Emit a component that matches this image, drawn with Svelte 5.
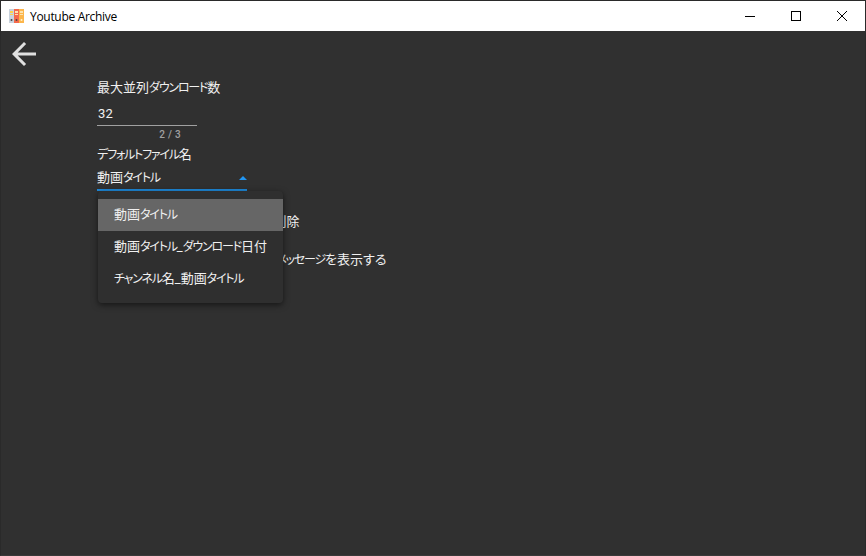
<script lang="ts">
  const options = ['動画タイトル', '動画タイトル_ダウンロード日付', 'チャンネル名_動画タイトル'];
  let selected = $state(0);

  // the original font has much narrower kana than Noto, so kana runs get their own class
  const runs = (text: string) => text.split(/([ァ-ヶー]+)/).filter(Boolean);
  const isKana = (run: string) => /^[ァ-ヶー]/.test(run);
</script>

{#snippet jp(text: string)}
  {#each runs(text) as run}<span class:kana={isKana(run)}>{run}</span>{/each}
{/snippet}

<div class="window">
  <header class="titlebar">
    <svg class="app-icon" viewBox="0 0 16 16" width="16" height="16" aria-hidden="true">
      <rect x="0" y="1" width="5" height="14" fill="#c9d3de" />
      <rect x="5" y="1" width="5" height="14" fill="#f4694c" />
      <rect x="10" y="1" width="5" height="14" fill="#fcb64b" />
      <rect x="1" y="3" width="3" height="2" fill="#fcd24b" />
      <rect x="6" y="3" width="3" height="2" fill="#fde3b0" />
      <rect x="11" y="3" width="3" height="2" fill="#fde3b0" />
      <rect x="1" y="6" width="3" height="1" fill="#fcd24b" />
      <rect x="6" y="6" width="3" height="1" fill="#fde3b0" />
      <rect x="11" y="6" width="3" height="1" fill="#fde3b0" />
      <circle cx="2.5" cy="12" r="1" fill="#444" />
      <circle cx="7.5" cy="12" r="1" fill="#444" />
      <circle cx="12.5" cy="12" r="1" fill="#fff2cf" />
    </svg>
    <span class="title">Youtube Archive</span>
    <div class="controls">
      <button class="ctl" aria-label="Minimize">
        <svg width="10" height="10" viewBox="0 0 10 10"><path d="M0 5.5H10" stroke="#000" /></svg>
      </button>
      <button class="ctl" aria-label="Maximize">
        <svg width="10" height="10" viewBox="0 0 10 10"><rect x=".5" y=".5" width="9" height="9" fill="none" stroke="#000" /></svg>
      </button>
      <button class="ctl" aria-label="Close">
        <svg width="10" height="10" viewBox="0 0 10 10"><path d="M0 0L10 10M10 0L0 10" stroke="#000" /></svg>
      </button>
    </div>
  </header>

  <main class="content">
    <button class="back" aria-label="Back">
      <svg viewBox="0 0 24 24"><path d="M20 11H7.83l5.59-5.59L12 4l-8 8 8 8 1.41-1.41L7.83 13H20v-2z" fill="#e0e0e0" /></svg>
    </button>

    <div class="form">
      <div class="field number">
        <span class="label">{@render jp('最大並列ダウンロード数')}</span>
        <div class="value">32</div>
        <div class="counter">2 / 3</div>
      </div>

      <div class="field select">
        <span class="label">{@render jp('デフォルトファイル名')}</span>
        <div class="value sel">
          <span>{@render jp('動画タイトル')}</span>
          <i class="caret"></i>
        </div>

        <div class="menu" role="listbox">
          {#each options as opt, i}
            <button class="item" class:active={selected === i} onclick={() => (selected = i)}>{@render jp(opt)}</button>
          {/each}
        </div>
      </div>

      <div class="check first">{@render jp('ダウンロード後に元ファイルを削除')}</div>
      <div class="check second">{@render jp('ダウンロード完了時に完了のメッセージを表示する')}</div>
    </div>
  </main>
</div>

<style>
  :global(body) {
    margin: 0;
    background: #2f2f2f;
  }

  .window {
    width: 866px;
    height: 556px;
    box-sizing: border-box;
    border: 1px solid #2a2a2a;
    border-bottom-color: #3a3a3a;
    display: flex;
    flex-direction: column;
    font-family: Roboto, "Noto Sans CJK JP", sans-serif;
    font-feature-settings: "palt" 1;
    background: #303030;
    color: #f0f0f0;
    overflow: hidden;
  }

  .kana {
    font-size: 12px;
    letter-spacing: -1.2px;
  }

  .titlebar {
    height: 30px;
    flex: none;
    background: #fff;
    display: flex;
    align-items: center;
    padding-left: 8px;
    color: #000;
  }

  .app-icon {
    margin-right: 5px;
    margin-top: -1px;
  }

  .title {
    font-family: "Open Sans", "Liberation Sans", sans-serif;
    font-size: 12px;
    letter-spacing: -0.3px;
  }

  .controls {
    margin-left: auto;
    display: flex;
  }

  .ctl {
    width: 46px;
    height: 30px;
    padding: 0;
    border: none;
    background: none;
    display: flex;
    align-items: center;
    justify-content: center;
  }

  .content {
    flex: 1;
    position: relative;
  }

  .back {
    position: absolute;
    left: 5px;
    top: 5px;
    width: 36px;
    height: 36px;
    padding: 0;
    border: none;
    background: none;
    display: flex;
    align-items: center;
    justify-content: center;
  }

  .back svg {
    width: 36px;
    height: 36px;
    flex: none;
  }

  .form {
    padding: 47px 0 0 96px;
    display: flex;
    flex-direction: column;
    font-size: 13px;
  }

  .field {
    display: flex;
    flex-direction: column;
    align-items: flex-start;
  }

  .label {
    line-height: 20px;
  }

  .number .value {
    width: 100px;
    box-sizing: border-box;
    padding-left: 1px;
    margin-top: 6px;
    height: 22px;
    line-height: 20px;
    border-bottom: 1px solid #a0a0a0;
    letter-spacing: 0.3px;
  }

  .counter {
    width: 100px;
    text-align: right;
    padding-right: 16px;
    box-sizing: border-box;
    font-size: 10px;
    font-weight: 500;
    line-height: 17px;
    height: 17px;
    color: #a0a0a0;
    letter-spacing: 0.3px;
  }

  .select {
    position: relative;
    margin-top: 2px;
  }

  .sel {
    width: 150px;
    box-sizing: border-box;
    height: 24px;
    margin-top: 2px;
    margin-bottom: 1px;
    line-height: 20px;
    border-bottom: 2px solid #1e88d8;
    display: flex;
    justify-content: space-between;
    align-items: center;
  }

  .caret {
    width: 0;
    height: 0;
    border-left: 4px solid transparent;
    border-right: 4px solid transparent;
    border-bottom: 4px solid #2196f3;
  }

  .menu {
    position: absolute;
    left: 1px;
    top: 46px;
    width: 185px;
    padding: 8px 0;
    background: #2f2f2f;
    border-radius: 4px;
    box-shadow: 0 2px 6px rgba(0, 0, 0, 0.55);
    display: flex;
    flex-direction: column;
    z-index: 2;
  }

  .item {
    height: 32px;
    padding: 0 16px 4px;
    border: none;
    background: none;
    color: #f0f0f0;
    font: inherit;
    text-align: left;
    white-space: nowrap;
  }

  .item.active {
    background: #666;
  }

  .check {
    line-height: 20px;
    white-space: nowrap;
  }

  .first {
    margin-top: 20px;
    padding-left: 31px;
  }

  .second {
    margin-top: 18px;
    padding-left: 31px;
  }
</style>
